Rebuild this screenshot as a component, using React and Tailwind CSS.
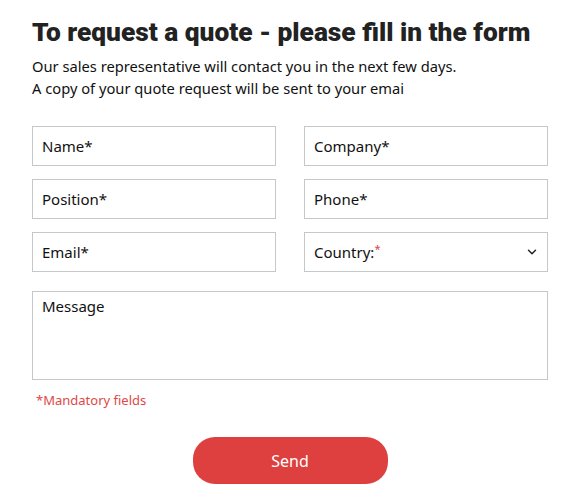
import { ChevronDown } from 'lucide-react';

const Field = ({ label }) => (
  <div className="h-10 border border-[#c5c8c8] flex items-center px-[9px] text-[15px] text-[#111]">
    {label}
  </div>
);

export default function App() {
  return (
    <div className="w-[566px] h-[492px] bg-white px-8 pt-[16px] font-['Noto_Sans',sans-serif]">
      <h1 className="whitespace-nowrap text-[26.3px] leading-[32px] font-black text-[#222] font-['Roboto',sans-serif]">
        To request a quote - please fill in the form
      </h1>
      <p className="mt-[7px] text-[14.7px] leading-[22px] text-[#111]">
        Our sales representative will contact you in the next few days.
        <br />
        A copy of your quote request will be sent to your emai
      </p>

      <div className="mt-[27px] w-[516px] grid grid-cols-2 gap-x-[28px] gap-y-[13px]">
        <Field label="Name*" />
        <Field label="Company*" />
        <Field label="Position*" />
        <Field label="Phone*" />
        <Field label="Email*" />
        <div className="h-10 border border-[#c5c8c8] flex items-center justify-between pl-[9px] pr-[8px] text-[15px] text-[#111]">
          <span>
            Country:<span className="text-[#e04444] text-[11px] align-top">*</span>
          </span>
          <ChevronDown size={14} strokeWidth={2.5} className="text-[#222]" />
        </div>
      </div>

      <div className="mt-[19px] w-[516px] h-[89px] border border-[#c5c8c8] px-[9px] pt-[3px] text-[15px] text-[#111]">
        Message
      </div>

      <p className="mt-[10px] pl-[4px] text-[13px] leading-[20px] text-[#e04848]">*Mandatory fields</p>

      <div className="mt-[27px] w-[516px] flex justify-center">
        <button className="w-[195px] h-[47px] rounded-[22px] bg-[#de3f3f] text-white text-[16px]">
          Send
        </button>
      </div>
    </div>
  );
}
